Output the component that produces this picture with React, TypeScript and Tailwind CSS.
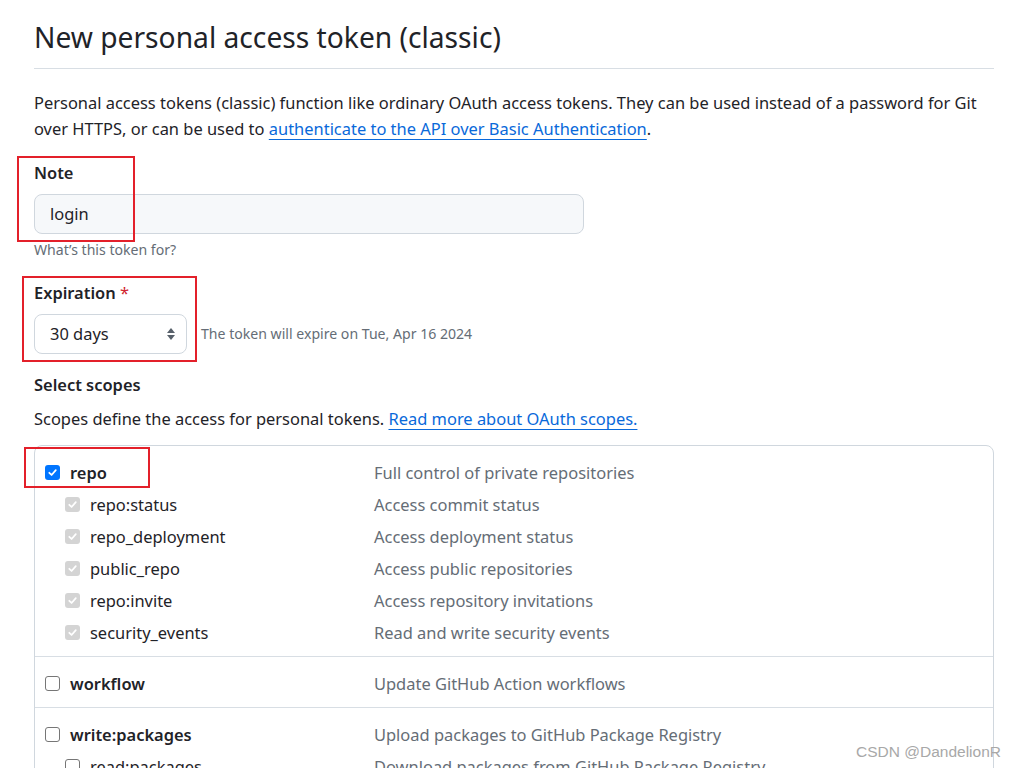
import React from "react";

const font = { fontFamily: '"Noto Sans", "Open Sans", sans-serif' };

type Scope = { name: string; desc: string; checked?: boolean; disabled?: boolean; sub?: boolean };

const groups: Scope[][] = [
  [
    { name: "repo", desc: "Full control of private repositories", checked: true },
    { name: "repo:status", desc: "Access commit status", checked: true, disabled: true, sub: true },
    { name: "repo_deployment", desc: "Access deployment status", checked: true, disabled: true, sub: true },
    { name: "public_repo", desc: "Access public repositories", checked: true, disabled: true, sub: true },
    { name: "repo:invite", desc: "Access repository invitations", checked: true, disabled: true, sub: true },
    { name: "security_events", desc: "Read and write security events", checked: true, disabled: true, sub: true },
  ],
  [{ name: "workflow", desc: "Update GitHub Action workflows" }],
  [
    { name: "write:packages", desc: "Upload packages to GitHub Package Registry" },
    { name: "read:packages", desc: "Download packages from GitHub Package Registry", sub: true },
  ],
];

function Check({ checked, disabled }: { checked?: boolean; disabled?: boolean }) {
  if (checked) {
    return (
      <span
        className={
          "flex h-[15px] w-[15px] shrink-0 items-center justify-center rounded-[3px] " +
          (disabled ? "bg-[#d4d4d4]" : "bg-[#0075ff]")
        }
      >
        <svg width="11" height="11" viewBox="0 0 12 12" fill="none">
          <path d="M2.5 6.3 L5 8.7 L9.6 3.4" stroke="white" strokeWidth="1.9" strokeLinecap="round" strokeLinejoin="round" />
        </svg>
      </span>
    );
  }
  return <span className="h-[15px] w-[15px] shrink-0 rounded-[3px] border border-[#767676] bg-white" />;
}

export default function App() {
  return (
    <div className="relative h-[768px] w-[1017px] overflow-hidden bg-white text-[#1f2328]" style={font}>
      <div className="ml-[34px] w-[960px]">
        <div className="border-b border-[#d8dee4] pt-[18px] pb-[12px]">
          <h1 className="text-[28.2px] font-normal leading-[38px]">New personal access token (classic)</h1>
        </div>

        <p className="mt-[21px] text-[16.45px] leading-[26px]">
          <span className="whitespace-nowrap">
            Personal access tokens (classic) function like ordinary OAuth access tokens. They can be used instead of a password for Git
          </span>
          <br />
          over HTTPS, or can be used to{" "}
          <a className="text-[#0969da] underline underline-offset-[4px]">authenticate to the API over Basic Authentication</a>.
        </p>

        <div className="mt-[18px] text-[16.45px] font-semibold leading-[26px]">Note</div>
        <div className="mt-[8px] flex h-[40px] w-[550px] items-center rounded-[8px] border border-[#d0d7de] bg-[#f6f8fa] px-[15px] text-[16.45px]">
          login
        </div>
        <div className="mt-[6px] text-[14.1px] leading-[20px] text-[#656d76]">What’s this token for?</div>

        <div className="mt-[20px] text-[16.45px] font-semibold leading-[26px]">
          Expiration <span className="font-normal text-[#d1242f]">*</span>
        </div>
        <div className="mt-[8px] flex items-center gap-[14px]">
          <div className="flex h-[40px] w-[153px] items-center justify-between rounded-[8px] border border-[#d0d7de] bg-white pl-[15px] pr-[9px] text-[16.45px]">
            <span>30 days</span>
            <svg width="12" height="16" viewBox="0 0 12 16">
              <path d="M6 2 L10 7 H2 Z" fill="#57606a" />
              <path d="M6 14 L10 9 H2 Z" fill="#57606a" />
            </svg>
          </div>
          <span className="text-[14.1px] text-[#656d76]">The token will expire on Tue, Apr 16 2024</span>
        </div>

        <div className="mt-[18px] text-[16.45px] font-semibold leading-[26px]">Select scopes</div>
        <p className="mt-[8px] text-[16.45px] leading-[26px]">
          Scopes define the access for personal tokens.{" "}
          <a className="text-[#0969da] underline underline-offset-[4px]">Read more about OAuth scopes.</a>
        </p>

        <div className="mt-[13px] rounded-t-[8px] border border-[#d0d7de]">
          {groups.map((g, gi) => (
            <div key={gi} className={"pt-[11px] pb-[7px] " + (gi > 0 ? "border-t border-[#d8dee4]" : "")}>
              {g.map((s) => (
                <div key={s.name} className="flex h-[32px] items-center text-[16.45px]">
                  <div className={"flex w-[339px] items-center gap-[10px] " + (s.sub ? "pl-[30px]" : "pl-[10px]")}>
                    <Check checked={s.checked} disabled={s.disabled} />
                    <span className={s.sub ? "" : "font-semibold"}>{s.name}</span>
                  </div>
                  <span className="text-[#656d76]">{s.desc}</span>
                </div>
              ))}
            </div>
          ))}
        </div>
      </div>

      <div className="absolute left-[17px] top-[156px] h-[86px] w-[118px] border-2 border-[#e3202a]" />
      <div className="absolute left-[22px] top-[276px] h-[86px] w-[175px] border-2 border-[#e3202a]" />
      <div className="absolute left-[24px] top-[447px] h-[41px] w-[126px] border-2 border-[#e3202a]" />

      <div
        className="absolute right-[16px] top-[742px] text-[15.5px] leading-[20px] text-[#a8a8a8]"
        style={{ fontFamily: '"Liberation Sans", Arial, sans-serif' }}
      >
        CSDN @DandelionR
      </div>
    </div>
  );
}
